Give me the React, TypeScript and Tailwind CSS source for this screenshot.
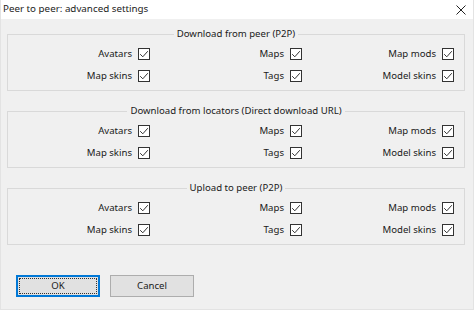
const rows = [
  ['Avatars', 'Maps', 'Map mods'],
  ['Map skins', 'Tags', 'Model skins'],
];

const groups = [
  'Download from peer (P2P)',
  'Download from locators (Direct download URL)',
  'Upload to peer (P2P)',
];

const CheckBox = () => (
  <span className="w-[12px] h-[12px] border border-[#333333] bg-white flex items-center justify-center shrink-0">
    <svg width="10" height="10" viewBox="0 0 10 10" fill="none">
      <path d="M1.2 5.2 L3.8 7.8 L8.8 2.2" stroke="#333333" strokeWidth="1" />
    </svg>
  </span>
);

const Group = ({ title }: { title: string }) => (
  <fieldset className="border border-[#d9d9d9] px-0 pb-[3px] m-0">
    <legend className="mx-auto px-[3px] leading-[14px]">{title}</legend>
    <div className="pt-[2px]">
      {rows.map((row, i) => (
        <div key={i} className="grid grid-cols-3 h-[22px]">
          {row.map((label) => (
            <label key={label} className="flex items-center justify-end gap-[6px] pr-[10px]">
              <span>{label}</span>
              <CheckBox />
            </label>
          ))}
        </div>
      ))}
    </div>
  </fieldset>
);

export default function App() {
  return (
    <div
      className="w-[474px] h-[310px] flex flex-col bg-[#f0f0f0] text-[9.6px] text-[#1a1a1a] border border-[#e3e3e3] border-t-0"
      style={{ fontFamily: '"Noto Sans", "Open Sans", sans-serif' }}
    >
      <div className="h-[19px] bg-white flex items-center justify-between pl-[2px] pr-[7px] text-[9.8px] text-[#222]">
        <span>Peer to peer: advanced settings</span>
        <svg width="10" height="10" viewBox="0 0 10 10">
          <path d="M0.5 0.5 L9.5 9.5 M9.5 0.5 L0.5 9.5" stroke="#222" strokeWidth="1" />
        </svg>
      </div>
      <div className="flex-1 flex flex-col pl-[6px] pr-[8px] pt-[8px]">
        <div className="flex flex-col gap-[13px]">
          {groups.map((g) => (
            <Group key={g} title={g} />
          ))}
        </div>
        <div className="flex gap-[10px] pl-[9px] mt-[30px]">
          <button className="w-[84px] h-[22px] border-2 border-[#0078d7] bg-[#e1e1e1] flex items-center justify-center p-[1px]">
            <span className="w-full h-full border border-dotted border-[#333] flex items-center justify-center">OK</span>
          </button>
          <button className="w-[84px] h-[22px] border border-[#adadad] bg-[#e1e1e1] flex items-center justify-center">
            Cancel
          </button>
        </div>
      </div>
    </div>
  );
}
